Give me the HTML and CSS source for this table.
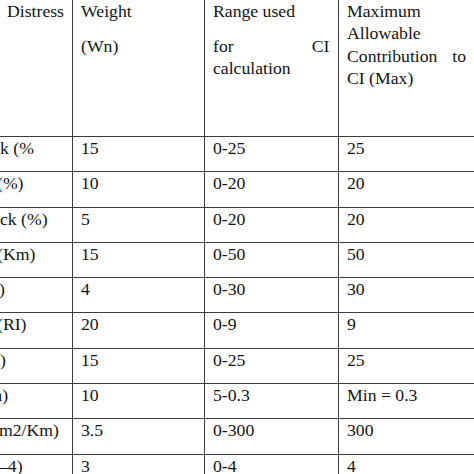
FILE: index.html
```html
<!DOCTYPE html>
<html lang="en">
<head>
<meta charset="utf-8">
<title>Distress weights</title>
<link rel="stylesheet" href="styles.css">
</head>
<body>
<div class="frame">
  <table class="grid">
    <colgroup>
      <col class="w1"><col class="w2"><col class="w3"><col class="w4">
    </colgroup>
    <thead>
      <tr class="head">
        <th class="first"><p class="lead">Distress</p></th>
        <th><p class="para">Weight</p><p>(Wn)</p></th>
        <th><p class="para">Range used</p><p class="just"><span>for</span><span>CI</span></p><p>calculation</p></th>
        <th><p>Maximum</p><p>Allowable</p><p class="just"><span>Contribution</span><span>to</span></p><p>CI (Max)</p></th>
      </tr>
    </thead>
    <tbody>
      <tr><td class="first">k (%</td><td>15</td><td>0-25</td><td>25</td></tr>
      <tr><td class="first"><span class="in3">(%)</span></td><td>10</td><td>0-20</td><td>20</td></tr>
      <tr><td class="first">ck (%)</td><td>5</td><td>0-20</td><td>20</td></tr>
      <tr><td class="first"><span class="in3">(Km)</span></td><td>15</td><td>0-50</td><td>50</td></tr>
      <tr><td class="first"><span class="in1">)</span></td><td>4</td><td>0-30</td><td>30</td></tr>
      <tr><td class="first"><span class="in3">(RI)</span></td><td>20</td><td>0-9</td><td>9</td></tr>
      <tr><td class="first">)</td><td>15</td><td>0-25</td><td>25</td></tr>
      <tr><td class="first"><span class="in12">m)</span></td><td>10</td><td>5-0.3</td><td>Min = 0.3</td></tr>
      <tr><td class="first"><span class="in1">m2/Km)</span></td><td>3.5</td><td>0-300</td><td>300</td></tr>
      <tr><td class="first"><span class="in1">–4)</span></td><td>3</td><td>0-4</td><td>4</td></tr>
    </tbody>
  </table>
</div>
</body>
</html>
```

FILE: styles.css
```css
html, body {
  margin: 0;
  padding: 0;
  background: #ffffff;
  overflow: hidden;
}

.frame {
  width: 474px;
  height: 474px;
  overflow: hidden;
  background: #ffffff;
}

.grid {
  border-collapse: collapse;
  table-layout: fixed;
  width: 474px;
  font-family: "Liberation Serif", "Times New Roman", serif;
  font-size: 17.7px;
  line-height: 22.4px;
  color: #141414;
}

.w1 { width: 72px; }
.w2 { width: 132px; }
.w3 { width: 134px; }
.w4 { width: 136px; }

.grid th,
.grid td {
  border: 1px solid #3c3c3c;
  padding: 0 8px 0 8.5px;
  vertical-align: top;
  text-align: left;
  font-weight: normal;
  white-space: nowrap;
}

.grid th {
  border-top: none;
}

.grid .first {
  border-left: none;
  padding-left: 0;
  overflow: hidden;
}

.grid th:last-child,
.grid td:last-child {
  border-right: none;
}

.head {
  height: 136.5px;
}

.grid tbody tr {
  height: 35.3px;
}

.grid p {
  margin: 0;
}

.grid .lead {
  padding-left: 7px;
}

.grid .para {
  margin-bottom: 12.4px;
}

.grid .just {
  display: flex;
  justify-content: space-between;
}

.in1 { display: inline-block; margin-left: -1px; }
.in3 { display: inline-block; margin-left: -3px; }
.in12 { display: inline-block; margin-left: -11.5px; }
```
